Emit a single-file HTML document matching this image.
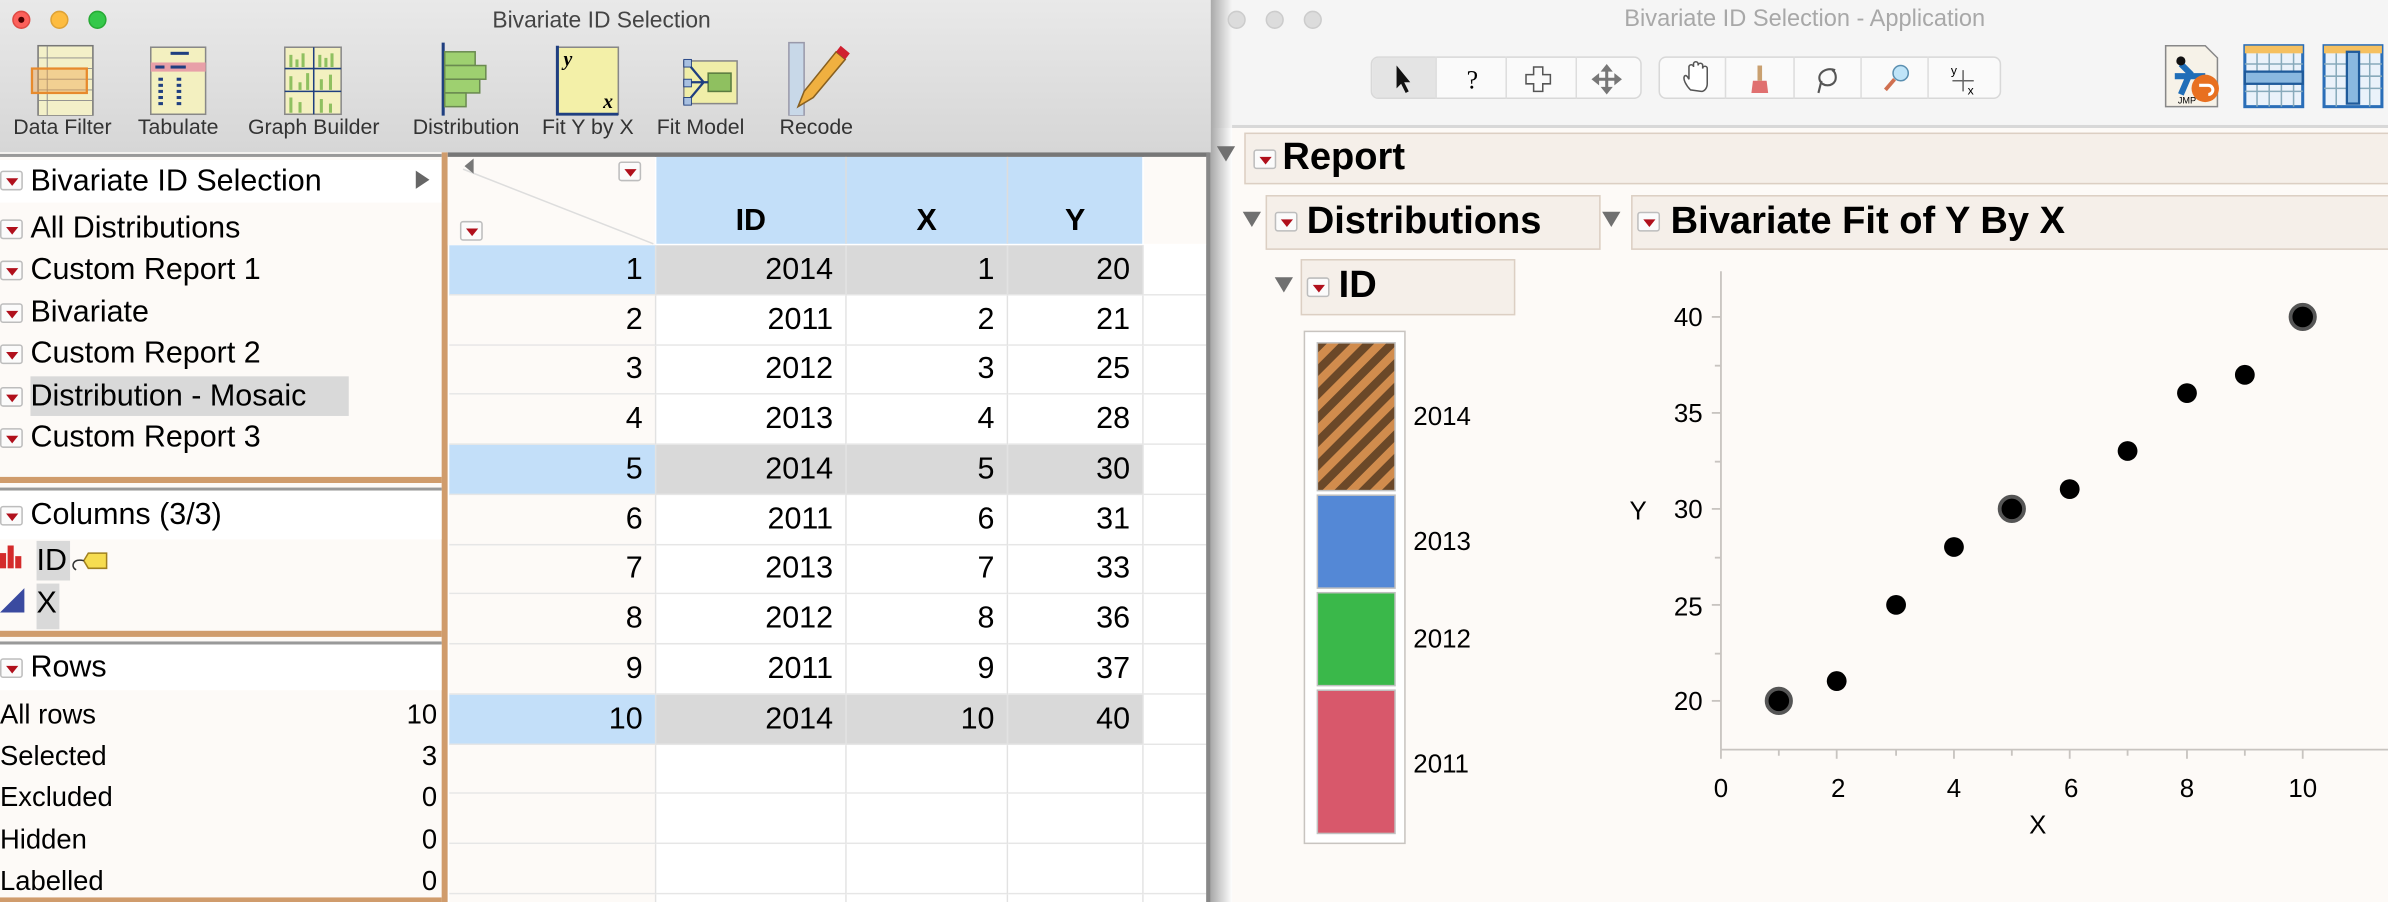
<!DOCTYPE html>
<html><head><meta charset="utf-8"><style>
*{margin:0;padding:0;box-sizing:border-box}
html,body{width:2388px;height:902px;overflow:hidden;background:#fff}
#s{position:absolute;left:0;top:0;width:1568px;height:592px;transform:scale(1.52296,1.52365);transform-origin:0 0;font-family:"Liberation Sans",sans-serif;color:#000;overflow:hidden}
.a{position:absolute}
.dd{position:absolute;width:15px;height:13px;border:1px solid #bdbdbd;border-radius:2px;background:#fbfbfb}
.dd:after{content:"";position:absolute;left:3px;top:4px;border-left:4px solid transparent;border-right:4px solid transparent;border-top:5px solid #b0101c}
.li{position:absolute;left:20px;font-size:20px;line-height:24px;white-space:nowrap}
.rw{position:absolute;left:0;width:287px;font-size:18px;line-height:22px}
.rw b{font-weight:normal;position:absolute;right:0}
.tl{position:absolute;font-size:14px;color:#333;white-space:nowrap;transform:translateX(-50%)}
.c{position:absolute;font-size:20px;text-align:right;line-height:32px;padding-right:8px;border-right:1px solid #e2e2e2;border-bottom:1px solid #e6e6e6}
.hb{position:absolute;background:#f5efe9;border:1px solid #dccfc3}
.hb span{position:absolute;font-weight:bold;font-size:25px;white-space:nowrap}
.tri{position:absolute;border-left:6px solid transparent;border-right:6px solid transparent;border-top:10px solid #707070}
</style></head><body><div id="s">

<!-- LEFT WINDOW -->
<div class="a" style="left:0;top:0;width:795px;height:100px;background:linear-gradient(#e9e9e9,#d6d6d6)"></div>
<div class="a" style="left:8px;top:7px;width:12px;height:12px;border-radius:50%;background:#fc605b;border:1px solid #de4a44"></div>
<div class="a" style="left:12px;top:11px;width:4px;height:4px;border-radius:50%;background:#4d0000"></div>
<div class="a" style="left:33px;top:7px;width:12px;height:12px;border-radius:50%;background:#fdbc40;border:1px solid #dea236"></div>
<div class="a" style="left:58px;top:7px;width:12px;height:12px;border-radius:50%;background:#34c84a;border:1px solid #27aa35"></div>
<div class="a" style="left:0;top:5px;width:790px;text-align:center;font-size:15px;color:#444">Bivariate ID Selection</div>

<svg class="a" style="left:0;top:26px" width="790" height="50">
 <rect x="25" y="4" width="36" height="46" fill="#f3f0c8" stroke="#777"/>
 <g stroke="#888" stroke-width=".6"><line x1="25" y1="12" x2="61" y2="12"/><line x1="25" y1="19" x2="61" y2="19"/><line x1="25" y1="26" x2="61" y2="26"/><line x1="25" y1="33" x2="61" y2="33"/><line x1="25" y1="40" x2="61" y2="40"/><line x1="31" y1="4" x2="31" y2="50"/></g>
 <rect x="21" y="19" width="36" height="16" fill="#f0a040" fill-opacity=".4" stroke="#e78a2c" stroke-width="1.5"/>
 <rect x="99" y="5" width="36" height="44" fill="#f3f0c0" stroke="#888"/>
 <rect x="99" y="15" width="36" height="6" fill="#e8a0a8"/>
 <g fill="#1f3f80"><rect x="112" y="8" width="12" height="2"/><rect x="112" y="17" width="10" height="2"/><rect x="102" y="17" width="6" height="2"/>
 <rect x="104" y="25" width="3" height="2"/><rect x="104" y="29" width="3" height="2"/><rect x="104" y="33" width="3" height="2"/><rect x="104" y="37" width="3" height="2"/><rect x="104" y="41" width="3" height="2"/>
 <rect x="116" y="25" width="3" height="2"/><rect x="116" y="29" width="3" height="2"/><rect x="116" y="33" width="3" height="2"/><rect x="116" y="37" width="3" height="2"/><rect x="116" y="41" width="3" height="2"/></g>
 <rect x="187" y="5" width="37" height="44" fill="#f3f0c0" stroke="#888"/>
 <line x1="206" y1="5" x2="206" y2="49" stroke="#1f3f80"/><line x1="187" y1="19" x2="224" y2="19" stroke="#1f3f80"/><line x1="187" y1="34" x2="224" y2="34" stroke="#1f3f80"/>
 <g fill="#8fc060"><rect x="190" y="10" width="2" height="8"/><rect x="194" y="13" width="2" height="5"/><rect x="198" y="9" width="2" height="9"/><rect x="209" y="10" width="2" height="8"/><rect x="213" y="12" width="2" height="6"/><rect x="217" y="9" width="2" height="9"/>
 <rect x="190" y="24" width="2" height="9"/><rect x="196" y="28" width="2" height="5"/><rect x="201" y="22" width="2" height="11"/><rect x="210" y="26" width="2" height="7"/><rect x="216" y="23" width="2" height="10"/>
 <rect x="190" y="38" width="2" height="10"/><rect x="196" y="41" width="2" height="7"/><rect x="210" y="39" width="2" height="9"/><rect x="216" y="42" width="2" height="6"/></g>
 <line x1="291" y1="2" x2="291" y2="50" stroke="#1f3f80" stroke-width="2"/>
 <g fill="#9ed070" stroke="#6a8a50"><rect x="292" y="8" width="20" height="9"/><rect x="292" y="17" width="27" height="9"/><rect x="292" y="26" width="23" height="9"/><rect x="292" y="35" width="14" height="9"/></g>
 <rect x="366" y="5" width="40" height="44" fill="#f3f0a8" stroke="#888"/>
 <path d="M366 4V49H406" stroke="#1f3f80" stroke-width="2" fill="none"/>
 <text x="370" y="17" font-size="13" font-style="italic" font-weight="bold" font-family="Liberation Serif">y</text>
 <text x="396" y="45" font-size="13" font-style="italic" font-weight="bold" font-family="Liberation Serif">x</text>
 <rect x="449" y="14" width="35" height="28" fill="#f0eea8" stroke="#888"/>
 <rect x="465" y="22" width="15" height="12" fill="#8fc060" stroke="#5a7a40"/>
 <path d="M452 16L462 28L452 40M452 28H465" stroke="#1f3f80" stroke-width="1.5" fill="none"/>
 <g fill="#a8c0e0" stroke="#1f3f80" stroke-width=".6"><rect x="449" y="13" width="5" height="5"/><rect x="449" y="26" width="5" height="5"/><rect x="449" y="38" width="5" height="5"/></g>
 <rect x="518" y="2" width="10" height="48" fill="#c8d8e8" stroke="#99a"/>
 <path d="M524 44L528 34L549 8L555 13L534 38Z" fill="#f0b040" stroke="#886020"/>
 <path d="M549 8L552 4L558 9L555 13Z" fill="#d02030"/>
</svg>
<div class="tl" style="left:41px;top:75px">Data Filter</div>
<div class="tl" style="left:117px;top:75px">Tabulate</div>
<div class="tl" style="left:206px;top:75px">Graph Builder</div>
<div class="tl" style="left:306px;top:75px">Distribution</div>
<div class="tl" style="left:386px;top:75px">Fit Y by X</div>
<div class="tl" style="left:460px;top:75px">Fit Model</div>
<div class="tl" style="left:536px;top:75px">Recode</div>

<!-- left panel -->
<div class="a" style="left:0;top:100px;width:293px;height:492px;background:#fdfaf7"></div>
<div class="a" style="left:0;top:101px;width:290px;height:2px;background:#999"></div>
<div class="a" style="left:0;top:105px;width:290px;height:28px;background:#fff"></div>
<div class="a" style="left:290px;top:100px;width:4px;height:492px;background:#d09c6c"></div>
<div class="a" style="left:0;top:313px;width:290px;height:4px;background:#d09c6c"></div>
<div class="a" style="left:0;top:320px;width:290px;height:2px;background:#999"></div>
<div class="a" style="left:0;top:322px;width:290px;height:32px;background:#fff"></div>
<div class="a" style="left:0;top:414px;width:290px;height:4px;background:#d09c6c"></div>
<div class="a" style="left:0;top:421px;width:290px;height:2px;background:#999"></div>
<div class="a" style="left:0;top:423px;width:290px;height:30px;background:#fff"></div>
<div class="a" style="left:0;top:589px;width:290px;height:3px;background:#d09c6c"></div>

<div class="dd" style="left:0;top:112px"></div><div class="li" style="top:107px">Bivariate ID Selection</div>
<div class="a" style="left:273px;top:112px;border-top:6px solid transparent;border-bottom:6px solid transparent;border-left:9px solid #666"></div>
<div class="dd" style="left:0;top:144px"></div><div class="li" style="top:138px">All Distributions</div>
<div class="dd" style="left:0;top:171px"></div><div class="li" style="top:165px">Custom Report 1</div>
<div class="dd" style="left:0;top:199px"></div><div class="li" style="top:193px">Bivariate</div>
<div class="dd" style="left:0;top:226px"></div><div class="li" style="top:220px">Custom Report 2</div>
<div class="a" style="left:20px;top:247px;width:209px;height:26px;background:#d9d9d9"></div>
<div class="dd" style="left:0;top:254px"></div><div class="li" style="top:248px">Distribution - Mosaic</div>
<div class="dd" style="left:0;top:281px"></div><div class="li" style="top:275px">Custom Report 3</div>

<div class="dd" style="left:0;top:332px"></div><div class="li" style="top:326px">Columns (3/3)</div>
<div class="a" style="left:24px;top:355px;width:22px;height:26px;background:#d9d9d9"></div>
<div class="a" style="left:24px;top:383px;width:15px;height:30px;background:#d9d9d9"></div>
<svg class="a" style="left:0;top:358px" width="80" height="50">
 <rect x="0" y="5" width="4" height="10" fill="#d42a2a"/><rect x="5" y="0" width="4" height="15" fill="#d42a2a"/><rect x="10" y="7" width="4" height="8" fill="#d42a2a"/>
 <path d="M0 44L16 28V44Z" fill="#3a4aa0"/>
 <path d="M58 5H70V15H58L55 10Z" fill="#f6dc50" stroke="#a08020"/>
 <path d="M55 10C48 8 46 14 50 16" stroke="#333" fill="none"/>
</svg>
<div class="li" style="left:24px;top:356px">ID</div>
<div class="li" style="left:24px;top:384px">X</div>

<div class="dd" style="left:0;top:432px"></div><div class="li" style="top:426px">Rows</div>
<div class="rw" style="top:458px">All rows<b>10</b></div>
<div class="rw" style="top:485px">Selected<b>3</b></div>
<div class="rw" style="top:512px">Excluded<b>0</b></div>
<div class="rw" style="top:540px">Hidden<b>0</b></div>
<div class="rw" style="top:567px">Labelled<b>0</b></div>

<!-- data grid -->
<div class="a" style="left:294px;top:100px;width:500px;height:492px;background:#fff"></div>
<div class="a" style="left:294px;top:100px;width:500px;height:3px;background:#777"></div>
<div class="a" style="left:294px;top:103px;width:136px;height:58px;background:#fdfaf7"></div>
<svg class="a" style="left:294px;top:103px" width="140" height="58"><path d="M10 8L135 57" stroke="#ddd"/><path d="M11 6L17 1V11Z" fill="#777"/></svg>
<div class="dd" style="left:406px;top:106px"></div>
<div class="dd" style="left:302px;top:145px"></div>
<div class="a" style="left:431px;top:103px;width:319px;height:57px;background:#c3dff9"></div>
<div class="a" style="left:555px;top:103px;width:1px;height:57px;background:#ddd"></div>
<div class="a" style="left:661px;top:103px;width:1px;height:57px;background:#ddd"></div>
<div class="a" style="left:751px;top:103px;width:42px;height:57px;background:#fdfaf7"></div>
<div class="a" style="left:431px;top:134px;width:124px;text-align:center;font-weight:bold;font-size:20px">ID</div>
<div class="a" style="left:556px;top:134px;width:105px;text-align:center;font-weight:bold;font-size:20px">X</div>
<div class="a" style="left:662px;top:134px;width:88px;text-align:center;font-weight:bold;font-size:20px">Y</div>
<div id="g"></div>
<div class="a" style="left:792px;top:100px;width:3px;height:492px;background:#888"></div>

<!-- RIGHT WINDOW -->
<div class="a" style="left:795px;top:0;width:773px;height:84px;background:#f5f5f5"></div>
<div class="a" style="left:795px;top:0;width:14px;height:592px;background:linear-gradient(90deg,#a9a9a9,rgba(220,220,220,0))"></div>
<div class="a" style="left:806px;top:7px;width:12px;height:12px;border-radius:50%;background:#dcdcdc;border:1px solid #ccc"></div>
<div class="a" style="left:831px;top:7px;width:12px;height:12px;border-radius:50%;background:#dcdcdc;border:1px solid #ccc"></div>
<div class="a" style="left:856px;top:7px;width:12px;height:12px;border-radius:50%;background:#dcdcdc;border:1px solid #ccc"></div>
<div class="a" style="left:800px;top:4px;width:770px;text-align:center;font-size:15.5px;color:#a8a8a8">Bivariate ID Selection - Application</div>
<div class="a" style="left:900px;top:37px;width:178px;height:28px;border:1px solid #d8d8d8;border-radius:5px;background:#fafafa"></div>
<div class="a" style="left:901px;top:38px;width:42px;height:26px;background:#e4e4e4;border-radius:4px 0 0 4px"></div>
<div class="a" style="left:1089px;top:37px;width:225px;height:28px;border:1px solid #d8d8d8;border-radius:5px;background:#fafafa"></div>
<svg class="a" style="left:900px;top:37px" width="420" height="28">
 <g stroke="#ddd"><line x1="43" y1="0" x2="43" y2="28"/><line x1="89" y1="0" x2="89" y2="28"/><line x1="135" y1="0" x2="135" y2="28"/>
 <line x1="233" y1="0" x2="233" y2="28"/><line x1="278" y1="0" x2="278" y2="28"/><line x1="322" y1="0" x2="322" y2="28"/><line x1="366" y1="0" x2="366" y2="28"/></g>
 <path d="M17 6L17 21L20 18L23 24L25 23L22 17L26 17Z" fill="#111"/>
 <text x="63" y="21" font-size="17" font-family="Liberation Serif">?</text>
 <path d="M107 7h6v5h5v6h-5v5h-6v-5h-5v-6h5z" fill="none" stroke="#555"/>
 <path d="M155 5l4 5h-3v4h4v-3l5 4-5 4v-3h-4v4h3l-4 5-4-5h3v-4h-4v3l-5-4 5-4v3h4v-4h-3z" fill="#777"/>
 <path d="M210 22c-3-3-5-7-4-9 1-1 2 0 3 2v-8c0-2 3-2 3 0v-2c0-2 3-2 3 0v1c0-2 3-2 3 0v2c0-2 3-2 3 0v10c0 3-2 5-4 5z" fill="#fff" stroke="#555"/>
 <rect x="254" y="6" width="3" height="10" fill="#c9a070"/><path d="M251 16h9l1 8h-11z" fill="#e07070"/>
 <path d="M305 9c-6-2-12 2-10 7 2 4 8 4 10 0 1-3 0-6-2-7M296 16l-2 8" fill="none" stroke="#555" stroke-width="1.4"/>
 <circle cx="348" cy="11" r="5" fill="#bfe4f8" stroke="#5a8fb0"/><path d="M344 15l-6 7" stroke="#d07050" stroke-width="2.5"/>
 <path d="M389 9v14M382 16h14" stroke="#666"/><text x="381" y="12" font-size="8">y</text><text x="392" y="25" font-size="8">x</text>
</svg>
<svg class="a" style="left:1418px;top:28px" width="150" height="44">
 <path d="M4 2H30L38 10V42H4Z" fill="#f6f2e8" stroke="#888"/>
 <path d="M14 14L20 20L14 34M10 22H30" stroke="#1f6eb8" stroke-width="4" fill="none"/>
 <circle cx="14" cy="12" r="3" fill="#111"/>
 <circle cx="30" cy="30" r="9" fill="#e87020"/><path d="M26 28h6a3 3 0 0 1 0 6" stroke="#fff" stroke-width="2" fill="none"/>
 <text x="12" y="40" font-size="6">JMP</text>
 <rect x="56" y="2" width="38" height="40" fill="#eaf2fa" stroke="#2a6eb8" stroke-width="2"/><rect x="56" y="2" width="38" height="5" fill="#f5c060"/>
 <g stroke="#8ab"><line x1="64" y1="7" x2="64" y2="42"/><line x1="72" y1="7" x2="72" y2="42"/><line x1="80" y1="7" x2="80" y2="42"/><line x1="88" y1="7" x2="88" y2="42"/><line x1="56" y1="14" x2="94" y2="14"/><line x1="56" y1="32" x2="94" y2="32"/></g>
 <rect x="56" y="19" width="38" height="8" fill="#8ab8e0" stroke="#1f5a9a" stroke-width="1.5"/>
 <rect x="108" y="2" width="38" height="40" fill="#eaf2fa" stroke="#2a6eb8" stroke-width="2"/><rect x="108" y="2" width="38" height="5" fill="#f5c060"/>
 <g stroke="#8ab"><line x1="108" y1="14" x2="146" y2="14"/><line x1="108" y1="22" x2="146" y2="22"/><line x1="108" y1="30" x2="146" y2="30"/><line x1="116" y1="7" x2="116" y2="42"/><line x1="138" y1="7" x2="138" y2="42"/></g>
 <rect x="123" y="6" width="8" height="34" fill="#8ab8e0" stroke="#1f5a9a" stroke-width="1.5"/>
</svg>
<div class="a" style="left:809px;top:82px;width:759px;height:2px;background:#d8d8d8"></div>
<div class="a" style="left:809px;top:84px;width:759px;height:508px;background:#fdfaf7"></div>

<div class="tri" style="left:799px;top:96px"></div>
<div class="hb" style="left:817px;top:87px;width:760px;height:34px"><div class="dd" style="left:5px;top:10px"></div><span style="left:24px;top:1px">Report</span></div>
<div class="tri" style="left:816px;top:139px"></div>
<div class="hb" style="left:831px;top:128px;width:220px;height:36px"><div class="dd" style="left:5px;top:10px"></div><span style="left:26px;top:2px">Distributions</span></div>
<div class="tri" style="left:1052px;top:139px"></div>
<div class="hb" style="left:1071px;top:128px;width:500px;height:36px"><div class="dd" style="left:3px;top:10px"></div><span style="left:25px;top:2px">Bivariate Fit of Y By X</span></div>
<div class="tri" style="left:837px;top:182px"></div>
<div class="hb" style="left:854px;top:170px;width:141px;height:37px"><div class="dd" style="left:3px;top:11px"></div><span style="left:24px;top:2px">ID</span></div>

<svg class="a" style="left:0;top:0" width="1568" height="592" font-family="Liberation Sans" font-size="17">
 <defs><pattern id="h" width="11" height="11" patternUnits="userSpaceOnUse" patternTransform="rotate(45)"><rect width="11" height="11" fill="#d18c4d"/><rect width="5.5" height="11" fill="#6b4828"/></pattern></defs>
 <rect x="856.5" y="217.5" width="66" height="336" fill="#fff" stroke="#c8c4c0"/>
 <rect x="865" y="225" width="51" height="97" fill="url(#h)" stroke="#c0c0c0"/>
 <rect x="865" y="325" width="51" height="61" fill="#5488d6" stroke="#c0c0c0"/>
 <rect x="865" y="389" width="51" height="61" fill="#3ab84a" stroke="#c0c0c0"/>
 <rect x="865" y="453" width="51" height="94" fill="#d8586b" stroke="#c0c0c0"/>
 <text x="928" y="279">2014</text><text x="928" y="361">2013</text><text x="928" y="425">2012</text><text x="928" y="507">2011</text>
 <g stroke="#c8c4c0" stroke-width="1.2"><line x1="1130" y1="178" x2="1130" y2="492"/><line x1="1130" y1="492" x2="1568" y2="492"/>
 <line x1="1124" y1="208" x2="1130" y2="208"/><line x1="1126" y1="240" x2="1130" y2="240"/><line x1="1124" y1="271" x2="1130" y2="271"/><line x1="1126" y1="303" x2="1130" y2="303"/><line x1="1124" y1="334" x2="1130" y2="334"/><line x1="1126" y1="366" x2="1130" y2="366"/><line x1="1124" y1="397" x2="1130" y2="397"/><line x1="1126" y1="429" x2="1130" y2="429"/><line x1="1124" y1="460" x2="1130" y2="460"/>
 <line x1="1130" y1="492" x2="1130" y2="498"/><line x1="1168" y1="492" x2="1168" y2="496"/><line x1="1206" y1="492" x2="1206" y2="498"/><line x1="1245" y1="492" x2="1245" y2="496"/><line x1="1283" y1="492" x2="1283" y2="498"/><line x1="1321" y1="492" x2="1321" y2="496"/><line x1="1359" y1="492" x2="1359" y2="498"/><line x1="1397" y1="492" x2="1397" y2="496"/><line x1="1436" y1="492" x2="1436" y2="498"/><line x1="1474" y1="492" x2="1474" y2="496"/><line x1="1512" y1="492" x2="1512" y2="498"/></g>
 <g text-anchor="end"><text x="1118" y="214">40</text><text x="1118" y="277">35</text><text x="1118" y="340">30</text><text x="1118" y="404">25</text><text x="1118" y="466">20</text></g>
 <text x="1070" y="341">Y</text>
 <g text-anchor="middle"><text x="1130" y="523">0</text><text x="1207" y="523">2</text><text x="1283" y="523">4</text><text x="1360" y="523">6</text><text x="1436" y="523">8</text><text x="1512" y="523">10</text><text x="1338" y="547">X</text></g>
 <g fill="#000"><circle cx="1168" cy="460" r="8" stroke="#555" stroke-width="2.5"/><circle cx="1206" cy="447" r="6.5"/><circle cx="1245" cy="397" r="6.5"/><circle cx="1283" cy="359" r="6.5"/><circle cx="1321" cy="334" r="8" stroke="#555" stroke-width="2.5"/><circle cx="1359" cy="321" r="6.5"/><circle cx="1397" cy="296" r="6.5"/><circle cx="1436" cy="258" r="6.5"/><circle cx="1474" cy="246" r="6.5"/><circle cx="1512" cy="208" r="8" stroke="#555" stroke-width="2.5"/></g>
</svg>

<script>
var d=[[2014,1,20],[2011,2,21],[2012,3,25],[2013,4,28],[2014,5,30],[2011,6,31],[2013,7,33],[2012,8,36],[2011,9,37],[2014,10,40]];
var sel={0:1,4:1,9:1},h='';
for(var i=0;i<14;i++){var t=Math.round(161+i*32.75),hh=Math.round(161+(i+1)*32.75)-t,s=sel[i];var r=i<10?d[i]:['','',''];
var st='top:'+t+'px;height:'+hh+'px;line-height:'+(hh-1)+'px;';
h+='<div class="c" style="left:295px;'+st+'width:136px;background:'+(s?'#c3dff9':'#fdfaf7')+'">'+(i<10?i+1:'')+'</div>';
var bg=s?'#d9d9d9':'#fff';
h+='<div class="c" style="left:431px;'+st+'width:125px;background:'+bg+'">'+r[0]+'</div>';
h+='<div class="c" style="left:556px;'+st+'width:106px;background:'+bg+'">'+r[1]+'</div>';
h+='<div class="c" style="left:662px;'+st+'width:89px;background:'+bg+'">'+r[2]+'</div>';
h+='<div class="c" style="left:751px;'+st+'width:42px;background:#fff"></div>';}
document.getElementById('g').innerHTML=h;
</script>
</div></body></html>
